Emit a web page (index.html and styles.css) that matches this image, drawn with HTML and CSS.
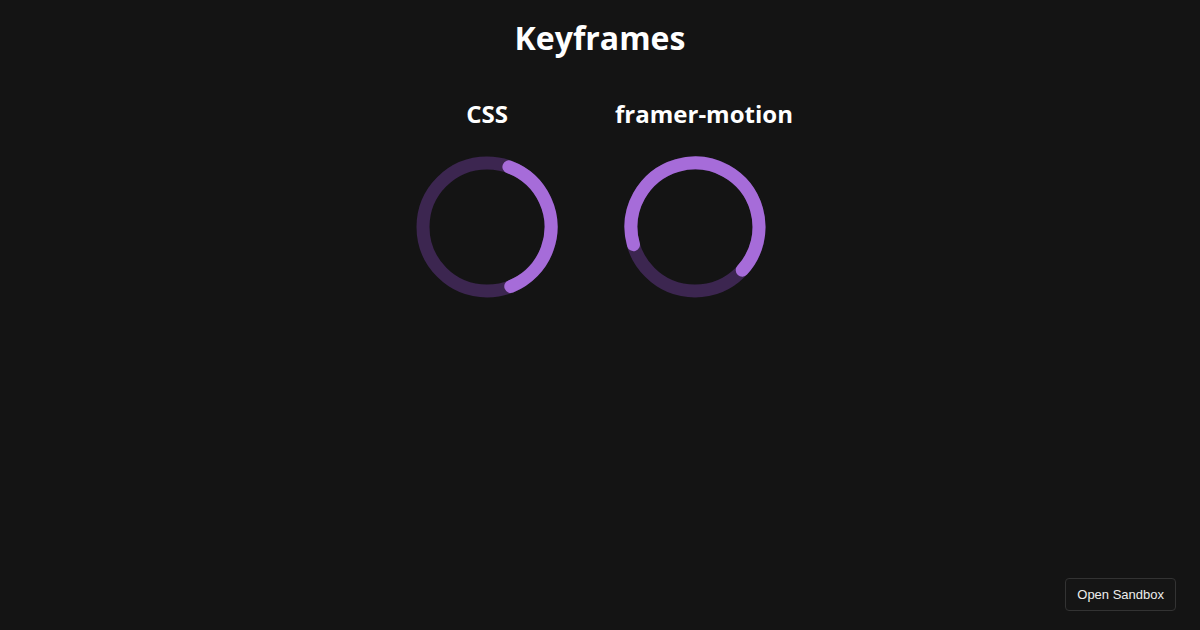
FILE: index.html
```html
<html lang="en">
<head>
    <meta charset="UTF-8">
    <meta name="viewport" content="width=device-width, initial-scale=1.0">
    <title>Keyframes</title>
    <link rel="stylesheet" href="styles.css">
</head>
<body>
    <div id="app">
        <h1 class="title">Keyframes</h1>
        <div class="demos">
            <div class="demo">
                <h2 class="demo-title">CSS</h2>
                <svg class="spinner" width="160" height="160" viewBox="0 0 160 160">
                    <circle class="track" cx="80" cy="80" r="64"></circle>
                    <circle class="arc" cx="80" cy="80" r="64" stroke-dasharray="154.1 402.12" transform="rotate(-70 80 80)"></circle>
                </svg>
            </div>
            <div class="demo">
                <h2 class="demo-title">framer-motion</h2>
                <svg class="spinner" width="160" height="160" viewBox="0 0 160 160">
                    <circle class="track" cx="80" cy="80" r="64"></circle>
                    <circle class="arc" cx="80" cy="80" r="64" stroke-dasharray="265.9 402.12" transform="rotate(164 80 80)"></circle>
                </svg>
            </div>
        </div>
    </div>
    <a class="sandbox-btn" href="#">Open Sandbox</a>
</body>
</html>
```

FILE: styles.css
```css
*{
    margin: 0;
    padding: 0;
    box-sizing: border-box;
}
html, body{
    height: 100%;
}
body{
    background: #141414;
    color: #fff;
    font-family: "Open Sans", "Noto Sans", sans-serif;
}

#app{
    display: flex;
    flex-direction: column;
    align-items: center;
    padding-top: 16px;
}
.title{
    font-size: 32px;
    font-weight: 700;
    line-height: 1.4;
}

.demos{
    display: flex;
    gap: 48px;
    margin-top: 36px;
}
.demo{
    display: flex;
    flex-direction: column;
    align-items: flex-start;
}
.demo-title{
    align-self: stretch;
    text-align: center;
    font-size: 24px;
    font-weight: 700;
    line-height: 1.4;
    margin-bottom: 17px;
}
.spinner{
    display: block;
}
.spinner circle{
    fill: none;
    stroke-width: 13;
}
.spinner .track{
    stroke: #3c2650;
}
.spinner .arc{
    stroke: #a66cd9;
    stroke-linecap: round;
}

.sandbox-btn{
    position: fixed;
    right: 24px;
    bottom: 19px;
    height: 33px;
    padding: 0 11px;
    display: flex;
    align-items: center;
    border: 1px solid #333;
    border-radius: 4px;
    background: #151515;
    color: #ededed;
    font-family: "Liberation Sans", Arial, sans-serif;
    font-size: 13px;
    text-decoration: none;
}
```
